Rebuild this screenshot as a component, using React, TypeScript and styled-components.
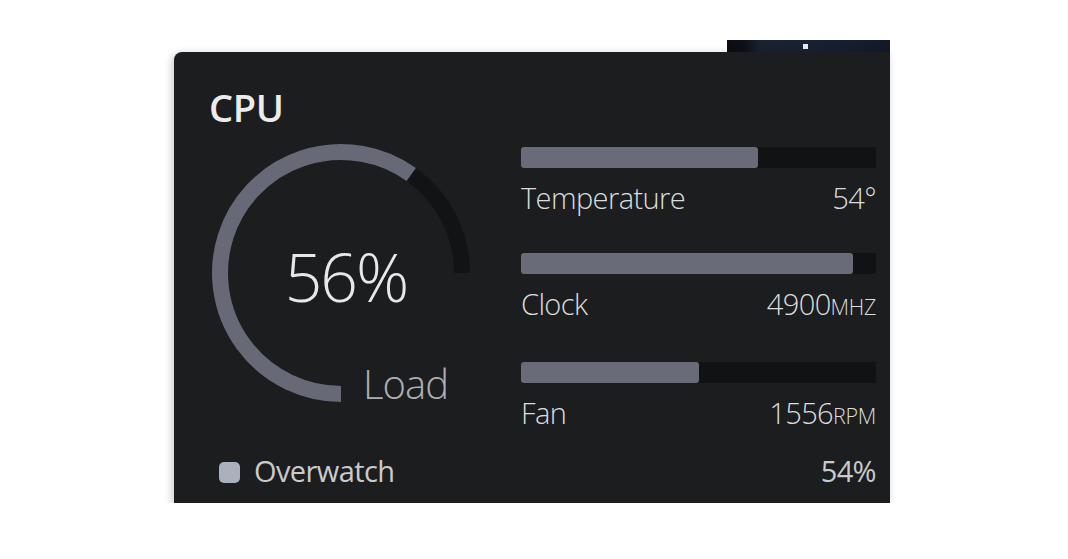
import React from 'react'
import styled, { createGlobalStyle } from 'styled-components'
// ______________________________________________________
//
const GlobalStyle = createGlobalStyle`
  html, body {
    margin: 0;
    padding: 0;
    background: #ffffff;
  }
  body {
    font-family: "Open Sans", "Noto Sans", sans-serif;
  }
`
// ______________________________________________________
//
type Metric = {
  label: string
  value: string
  unit?: string
  fill: number
}

const metrics: Metric[] = [
  { label: 'Temperature', value: '54°', fill: 0.668 },
  { label: 'Clock', value: '4900', unit: 'MHz', fill: 0.935 },
  { label: 'Fan', value: '1556', unit: 'RPM', fill: 0.501 },
]
// ______________________________________________________
//
const Page = styled.div`
  display: flex;
  flex-direction: column;
  width: 716px;
  padding: 40px 0 0 174px;
`

const Strip = styled.div`
  align-self: flex-end;
  display: flex;
  width: 163px;
  height: 12px;
  box-sizing: border-box;
  padding: 4px 0 0 76px;
  background: linear-gradient(
    90deg,
    #0b0d11 0,
    #0d1015 16px,
    #1a2232 34px,
    #172032 60%,
    #121a2a 100%
  );
`

const Dot = styled.span`
  width: 5px;
  height: 5px;
  background: #e6ebf2;
`

const Card = styled.div`
  display: flex;
  flex-direction: column;
  width: 716px;
  height: 451px;
  box-sizing: border-box;
  padding: 33px 14px 0 0;
  background: #1b1d1f;
  border-radius: 8px 0 0 0;
  box-shadow: -2px 2px 9px rgba(0, 0, 0, 0.22);
`

const Title = styled.h1`
  margin: 0 0 12px 35px;
  font-size: 38px;
  line-height: 45px;
  font-weight: 600;
  color: #ececec;
  letter-spacing: -0.3px;
`

const Main = styled.div`
  display: flex;
  align-items: flex-start;
`

const Gauge = styled.div`
  position: relative;
  flex: none;
  width: 262px;
  height: 262px;
  margin-left: 36px;
`

const GaugeValue = styled.div`
  position: absolute;
  left: 10px;
  right: 0;
  top: 101px;
  text-align: center;
  font-size: 66px;
  line-height: 66px;
  font-weight: 300;
  letter-spacing: -2px;
  color: #e8e8e8;
`

const GaugeCaption = styled.div`
  position: absolute;
  left: 153px;
  top: 222px;
  font-size: 40px;
  line-height: 40px;
  font-weight: 300;
  letter-spacing: -1px;
  color: #aeaeb2;
`

const Metrics = styled.div`
  display: flex;
  flex-direction: column;
  gap: 37px;
  width: 355px;
  margin-left: auto;
  padding-top: 5px;
`

const MetricBlock = styled.div`
  display: flex;
  flex-direction: column;
  gap: 12px;
`

const Track = styled.div`
  height: 21px;
  background: #111214;
  border-radius: 2px;
`

const Fill = styled.div`
  height: 100%;
  background: #6a6b79;
  border-radius: 3px;
`

const Row = styled.div`
  display: flex;
  justify-content: space-between;
  align-items: baseline;
  font-size: 29px;
  line-height: 36px;
  font-weight: 300;
  letter-spacing: -0.6px;
  color: #dcdcde;
`

const Unit = styled.span`
  font-size: 0.74em;
  text-transform: uppercase;
  letter-spacing: -0.3px;
`

const Footer = styled.div`
  display: flex;
  align-items: center;
  justify-content: space-between;
  margin: 19px 0 0 45px;
  font-size: 29px;
  line-height: 36px;
  letter-spacing: -0.6px;
  color: #c9cacc;
`

const Game = styled.div`
  display: flex;
  align-items: center;
  gap: 14px;
`

const Swatch = styled.span`
  width: 21px;
  height: 21px;
  border-radius: 5px;
  background: #a9b1bc;
  margin-top: 2px;
`
// ______________________________________________________
//
const R = 121
const C = 131
const point = (deg: number) => {
  const a = (deg * Math.PI) / 180
  return `${(C + R * Math.sin(a)).toFixed(2)} ${(C - R * Math.cos(a)).toFixed(2)}`
}
const arc = (from: number, to: number) =>
  `M ${point(from)} A ${R} ${R} 0 ${to - from > 180 ? 1 : 0} 1 ${point(to)}`

const GaugeRing: React.FC = () => (
  <svg width="262" height="262" viewBox="0 0 262 262">
    <path d={arc(395.5, 450)} fill="none" stroke="#111315" strokeWidth="16" />
    <path d={arc(180, 395.5)} fill="none" stroke="#686977" strokeWidth="16" />
  </svg>
)
// ______________________________________________________
//
const App: React.FC = () => (
  <>
    <GlobalStyle />
    <Page>
      <Strip>
        <Dot />
      </Strip>
      <Card>
        <Title>CPU</Title>
        <Main>
          <Gauge>
            <GaugeRing />
            <GaugeValue>56%</GaugeValue>
            <GaugeCaption>Load</GaugeCaption>
          </Gauge>
          <Metrics>
            {metrics.map((m) => (
              <MetricBlock key={m.label}>
                <Track>
                  <Fill style={{ width: `${m.fill * 100}%` }} />
                </Track>
                <Row>
                  <span>{m.label}</span>
                  <span>
                    {m.value}
                    {m.unit && <Unit>{m.unit}</Unit>}
                  </span>
                </Row>
              </MetricBlock>
            ))}
          </Metrics>
        </Main>
        <Footer>
          <Game>
            <Swatch />
            <span>Overwatch</span>
          </Game>
          <span>54%</span>
        </Footer>
      </Card>
    </Page>
  </>
)
// ______________________________________________________
//
export default App
